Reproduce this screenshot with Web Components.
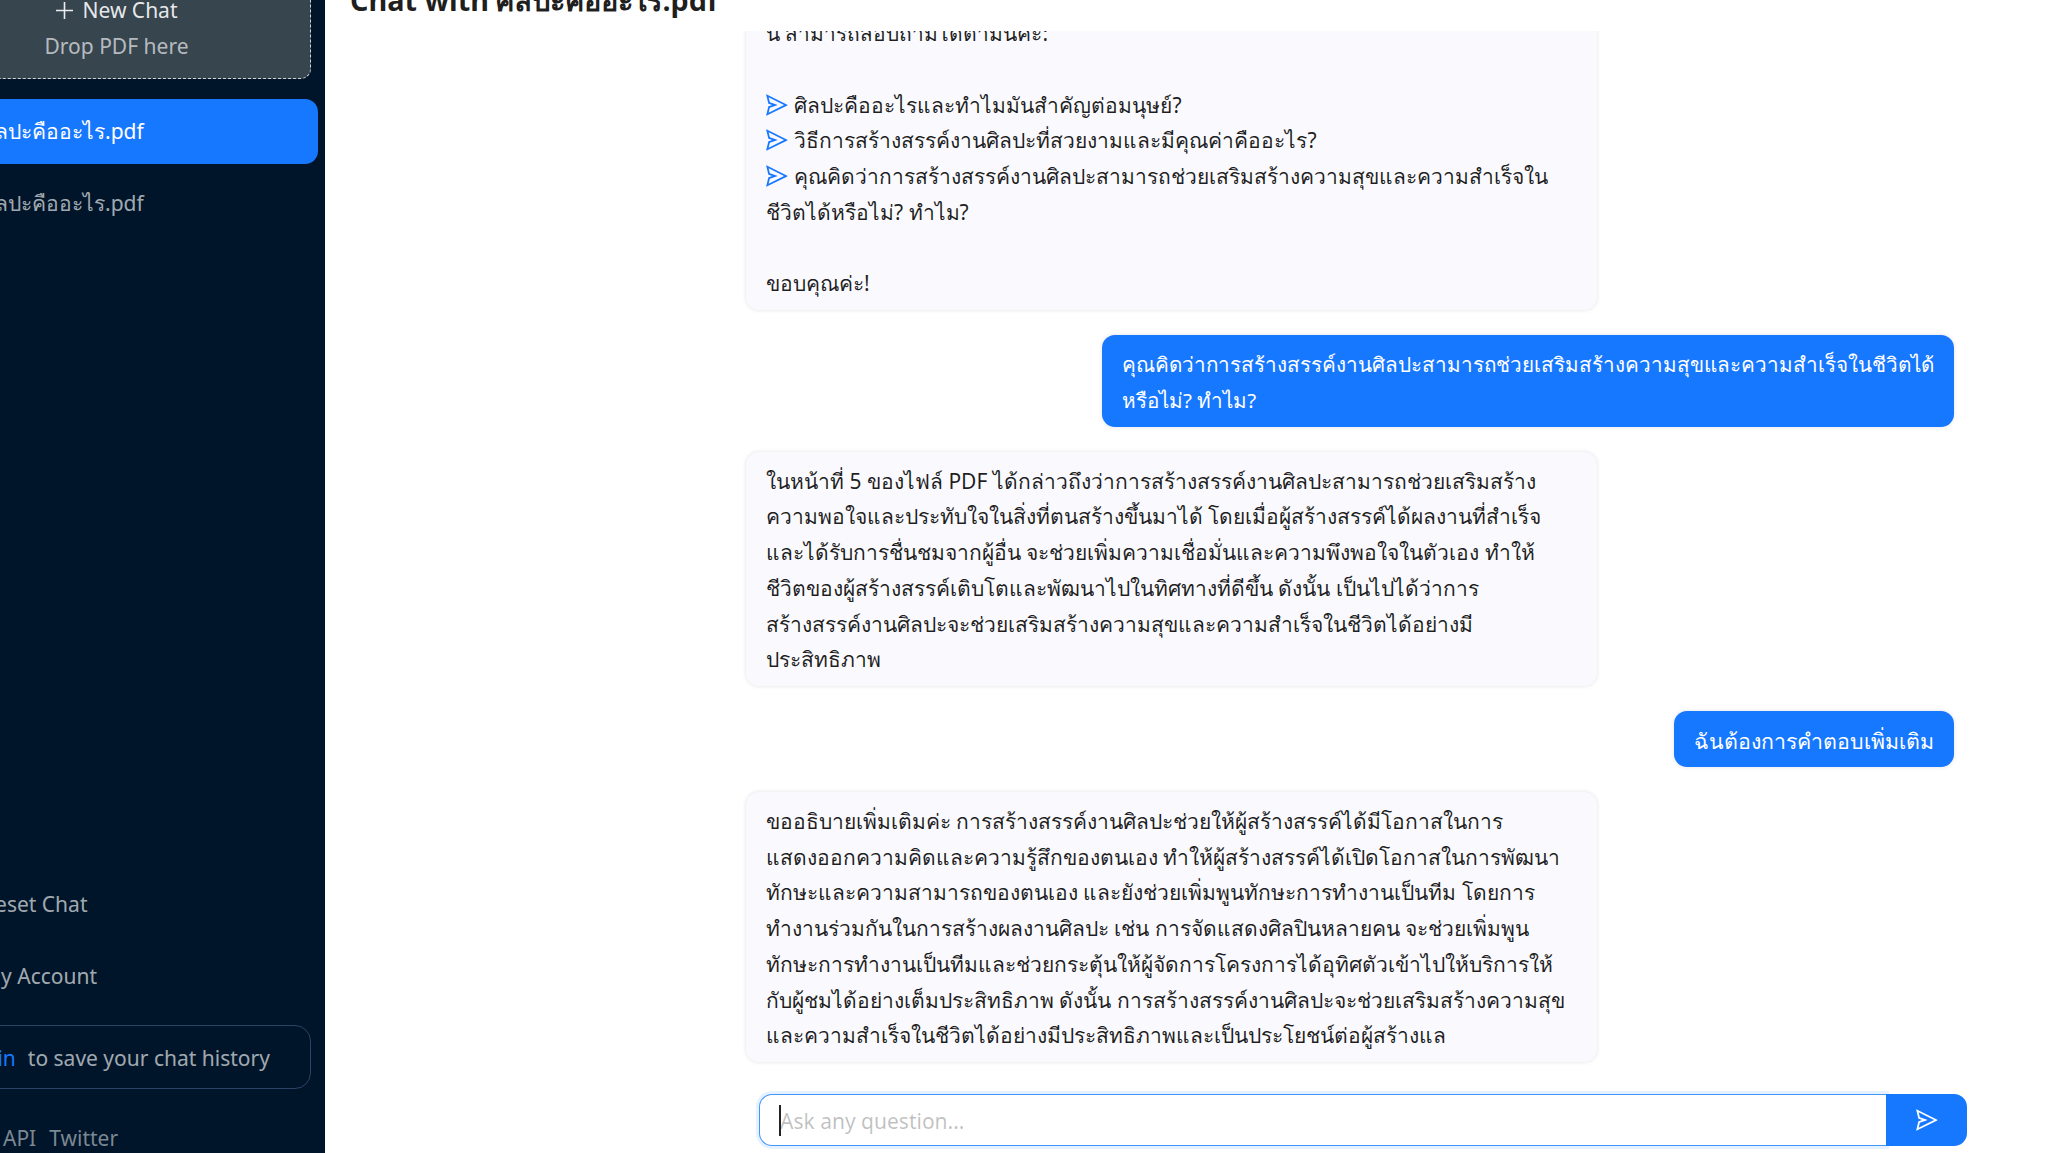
<!DOCTYPE html>
<html lang="th">
<head>
<meta charset="utf-8">
<title>Chat with ศิลปะคืออะไร.pdf</title>
<style>
  html, body { margin: 0; height: 100%; overflow: hidden; background: #fff; }
  body { font-family: "Noto Sans", "Open Sans", sans-serif; font-size: 21px; line-height: 35.75px; }
</style>
</head>
<body>
<app-shell>
  <side-bar slot="side">
    <nav-item slot="files" active>ศิลปะคืออะไร.pdf</nav-item>
    <nav-item slot="files">ศิลปะคืออะไร.pdf</nav-item>
    <nav-item slot="actions">Reset Chat</nav-item>
    <nav-item slot="actions">My Account</nav-item>
  </side-bar>
  <chat-panel slot="main" title-text="Chat with ศิลปะคืออะไร.pdf">
    <chat-bubble>น สามารถสอบถามได้ตามนี้ค่ะ:<br><br>
      <send-icon></send-icon> ศิลปะคืออะไรและทำไมมันสำคัญต่อมนุษย์?<br>
      <send-icon></send-icon> วิธีการสร้างสรรค์งานศิลปะที่สวยงามและมีคุณค่าคืออะไร?<br>
      <send-icon></send-icon> คุณคิดว่าการสร้างสรรค์งานศิลปะสามารถช่วยเสริมสร้างความสุขและความสำเร็จใน<br>ชีวิตได้หรือไม่? ทำไม?<br><br>
      ขอบคุณค่ะ!</chat-bubble>
    <chat-bubble from="user" style="font-size:20.65px">คุณคิดว่าการสร้างสรรค์งานศิลปะสามารถช่วยเสริมสร้างความสุขและความสำเร็จในชีวิตได้<br>หรือไม่? ทำไม?</chat-bubble>
    <chat-bubble>ในหน้าที่ 5 ของไฟล์ PDF ได้กล่าวถึงว่าการสร้างสรรค์งานศิลปะสามารถช่วยเสริมสร้าง<br>
      ความพอใจและประทับใจในสิ่งที่ตนสร้างขึ้นมาได้ โดยเมื่อผู้สร้างสรรค์ได้ผลงานที่สำเร็จ<br>
      และได้รับการชื่นชมจากผู้อื่น จะช่วยเพิ่มความเชื่อมั่นและความพึงพอใจในตัวเอง ทำให้<br>
      ชีวิตของผู้สร้างสรรค์เติบโตและพัฒนาไปในทิศทางที่ดีขึ้น ดังนั้น เป็นไปได้ว่าการ<br>
      สร้างสรรค์งานศิลปะจะช่วยเสริมสร้างความสุขและความสำเร็จในชีวิตได้อย่างมี<br>
      ประสิทธิภาพ</chat-bubble>
    <chat-bubble from="user" style="font-size:21.3px">ฉันต้องการคำตอบเพิ่มเติม</chat-bubble>
    <chat-bubble>ขออธิบายเพิ่มเติมค่ะ การสร้างสรรค์งานศิลปะช่วยให้ผู้สร้างสรรค์ได้มีโอกาสในการ<br>
      แสดงออกความคิดและความรู้สึกของตนเอง ทำให้ผู้สร้างสรรค์ได้เปิดโอกาสในการพัฒนา<br>
      ทักษะและความสามารถของตนเอง และยังช่วยเพิ่มพูนทักษะการทำงานเป็นทีม โดยการ<br>
      ทำงานร่วมกันในการสร้างผลงานศิลปะ เช่น การจัดแสดงศิลปินหลายคน จะช่วยเพิ่มพูน<br>
      ทักษะการทำงานเป็นทีมและช่วยกระตุ้นให้ผู้จัดการโครงการได้อุทิศตัวเข้าไปให้บริการให้<br>
      กับผู้ชมได้อย่างเต็มประสิทธิภาพ ดังนั้น การสร้างสรรค์งานศิลปะจะช่วยเสริมสร้างความสุข<br>
      และความสำเร็จในชีวิตได้อย่างมีประสิทธิภาพและเป็นประโยชน์ต่อผู้สร้างแล</chat-bubble>
    <chat-input slot="input"></chat-input>
  </chat-panel>
</app-shell>

<script>
const SEND_PATH = "M931.4 498.9L94.9 79.5c-3.4-1.7-7.3-2.1-11-1.2a15.99 15.99 0 0 0-11.7 19.3l86.2 352.2c1.3 5.3 5.2 9.6 10.4 11.3l147.7 50.7-147.6 50.7c-5.2 1.8-9.1 6-10.3 11.3L72.2 926.5c-.9 3.7-.5 7.6 1.2 10.9 3.9 7.9 13.5 11.1 21.5 7.2l836.5-417c3.1-1.5 5.6-4.1 7.2-7.1 3.9-8 .7-17.6-7.2-21.6zM170.8 826.3l50.3-205.6 295.2-101.3c2.3-.8 4.2-2.6 5-5 1.4-4.2-.8-8.7-5-10.2L221.1 403 171 198.2l628 314.9-628.2 313.2z";

class AppShell extends HTMLElement {
  constructor() {
    super();
    this.attachShadow({ mode: "open" });
    this.shadowRoot.innerHTML = `
<style>
:host { display: flex; height: 1153px; margin-left: -92px; width: 2140px; }
::slotted([slot=side]) { flex: 0 0 417px; }
::slotted([slot=main]) { flex: 1; min-width: 0; }
</style>
<slot name="side"></slot>
<slot name="main"></slot>`;
  }
}
customElements.define("app-shell", AppShell);

class SideBar extends HTMLElement {
  constructor() {
    super();
    this.attachShadow({ mode: "open" });
    this.shadowRoot.innerHTML = `
<style>
:host { display: flex; flex-direction: column; background: #001529; color: rgba(255,255,255,.65); overflow: hidden; }
.drop {
  margin: -22px 14px 20px; padding: 15px 14px 13px; text-align: center;
  background: #37454f; border: 1.5px dashed #d0d4d8; border-radius: 0 0 10px 10px; border-top: 0;
}
.new { color: rgba(255,255,255,.9); display: flex; justify-content: center; align-items: center; gap: 10px; }
.new svg { width: 17px; height: 17px; }
.files { display: flex; flex-direction: column; gap: 7px; }
.bottom { margin-top: auto; display: flex; flex-direction: column; gap: 7px; }
.signin {
  margin: 10px 14px 0; height: 59px; display: flex; align-items: center; justify-content: center; gap: 12px;
  padding: 3px 14px 0 0; border: 1px solid #2a4365; border-radius: 16px;
}
.signin a { color: #1677ff; }
.links { display: flex; gap: 13px; padding: 2px 0 0 95px; margin-top: 23px; height: 32px; color: #7b8894; }
</style>
<div class="drop">
  <div class="new">
    <svg viewBox="0 0 17 17"><path d="M8.5 0v17M0 8.5h17" stroke="currentColor" stroke-width="1.6" fill="none"/></svg>
    <span>New Chat</span>
  </div>
  <div>Drop PDF here</div>
</div>
<div class="files"><slot name="files"></slot></div>
<div class="bottom">
  <slot name="actions"></slot>
  <div class="signin"><a>Sign in</a> <span>to save your chat history</span></div>
  <div class="links"><span>API</span><span>Twitter</span></div>
</div>`;
  }
}
customElements.define("side-bar", SideBar);

class NavItem extends HTMLElement {
  constructor() {
    super();
    this.attachShadow({ mode: "open" });
    this.shadowRoot.innerHTML = `
<style>
:host { display: flex; align-items: center; box-sizing: border-box; height: 65px; margin: 0 7px; padding: 2px 0 0 67px; border-radius: 13px; white-space: nowrap; }
:host([active]) { background: #1677ff; color: #fff; }
</style>
<slot></slot>`;
  }
}
customElements.define("nav-item", NavItem);

class ChatPanel extends HTMLElement {
  constructor() {
    super();
    this.attachShadow({ mode: "open" });
    this.shadowRoot.innerHTML = `
<style>
:host { display: flex; flex-direction: column; height: 1153px; background: #fff; color: rgba(0,0,0,.88); }
header { flex: 0 0 31px; min-height: 0; display: flex; align-items: flex-end; padding: 0 0 13px 25px; box-sizing: border-box; }
h1 { margin: 0; font-size: 28.8px; line-height: 36px; font-weight: 700; white-space: nowrap; }
.log {
  flex: 1; min-height: 0; overflow: hidden; display: flex; flex-direction: column; justify-content: flex-end;
  gap: 25px; margin-left: 411px; width: 1228px; padding: 0 10px 32px; box-sizing: border-box;
}
.foot { margin: 0 0 7px 434px; width: 1208px; }
</style>
<header><h1></h1></header>
<div class="log"><slot></slot></div>
<div class="foot"><slot name="input"></slot></div>`;
    this.shadowRoot.querySelector("h1").textContent = this.getAttribute("title-text");
  }
}
customElements.define("chat-panel", ChatPanel);

class ChatBubble extends HTMLElement {
  constructor() {
    super();
    this.attachShadow({ mode: "open" });
    this.shadowRoot.innerHTML = `
<style>
:host {
  display: block; flex: none; box-sizing: border-box; width: 851px; padding: 12px 20px 8px;
  background: #f9f9fe; border-radius: 13px; box-shadow: 0 0 4px rgba(0,0,0,.12); white-space: nowrap;
}
:host([from=user]) { align-self: flex-end; width: fit-content; background: #1677ff; color: #fff; }
</style>
<slot></slot>`;
  }
}
customElements.define("chat-bubble", ChatBubble);

class SendIcon extends HTMLElement {
  constructor() {
    super();
    this.attachShadow({ mode: "open" });
    this.shadowRoot.innerHTML = `
<style>
:host { display: inline-block; width: 22px; height: 22px; margin-right: 1px; vertical-align: -3px; color: #1677ff; }
svg { display: block; width: 100%; height: 100%; fill: currentColor; }
</style>
<svg viewBox="64 64 896 896"><path d="${SEND_PATH}"/></svg>`;
  }
}
customElements.define("send-icon", SendIcon);

class ChatInput extends HTMLElement {
  constructor() {
    super();
    this.attachShadow({ mode: "open" });
    this.shadowRoot.innerHTML = `
<style>
:host { display: flex; height: 52px; position: relative; }
input {
  flex: 1; min-width: 0; box-sizing: border-box; font: inherit; color: inherit; outline: none;
  padding: 4px 20px 0; border: 1.5px solid #4096ff; border-right: 0; border-radius: 13px 0 0 13px;
  box-shadow: 0 0 0 3px #e6f2ff;
}
input::placeholder { color: rgba(0,0,0,.25); }
.caret { position: absolute; left: 20px; top: 11px; width: 1.5px; height: 31px; background: #222; }
button {
  flex: 0 0 81px; border: 0; padding: 0; background: #1677ff; color: #fff; border-radius: 0 13px 13px 0;
  display: flex; align-items: center; justify-content: center; position: relative;
}
</style>
<input type="text" placeholder="Ask any question...">
<div class="caret"></div>
<button aria-label="Send"><send-icon style="color:#fff;vertical-align:0;margin:0"></send-icon></button>`;
  }
}
customElements.define("chat-input", ChatInput);
</script>
</body>
</html>
